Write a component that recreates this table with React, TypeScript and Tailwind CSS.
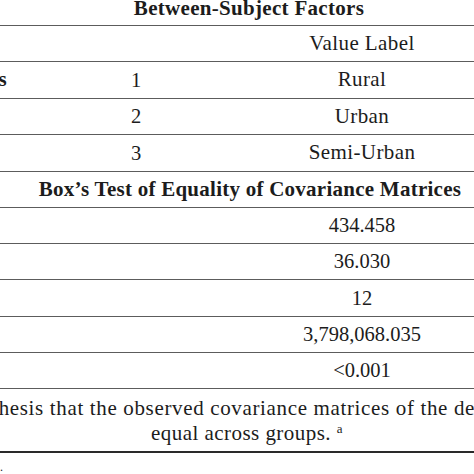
import React from "react";

const serif = { fontFamily: '"Liberation Serif", "Times New Roman", serif' };

const factorRows = [
  { label: "Areas", value: "1", name: "Rural", h: "h-[37px]" },
  { label: "", value: "2", name: "Urban", h: "h-[36px]" },
  { label: "", value: "3", name: "Semi-Urban", h: "h-[37px]" },
];

const boxRows = [
  { value: "434.458", h: "h-[36px]" },
  { value: "36.030", h: "h-[36px]" },
  { value: "12", h: "h-[37px]" },
  { value: "3,798,068.035", h: "h-[36px]" },
  { value: "<0.001", h: "h-[36px]" },
];

function Row({
  h,
  label,
  value,
  name,
  numeric,
}: {
  h: string;
  label?: string;
  value?: string;
  name: string;
  numeric?: boolean;
}) {
  return (
    <div className={`grid grid-cols-[126px_100px_352px] border-b border-[#5c5c5c] ${h}`}>
      <div className="flex items-center justify-end pr-[79px] font-bold tracking-[0.3px]">{label}</div>
      <div className="flex items-center justify-center text-[20.5px]">{value}</div>
      <div
        className={`flex items-center justify-center ${
          numeric ? "text-[20.5px]" : "tracking-[0.4px]"
        }`}
      >
        {name}
      </div>
    </div>
  );
}

export default function App() {
  return (
    <div className="h-[474px] w-[474px] overflow-hidden bg-white text-[21px] text-[#1c1c1c]" style={serif}>
      <div className="-ml-[40px] w-[578px]">
        <div className="h-[26px] border-b border-[#5c5c5c] text-center font-bold leading-[17px] tracking-[0.3px]">
          Between-Subject Factors
        </div>
        <Row h="h-[36px]" name="Value Label" />
        {factorRows.map((r) => (
          <Row key={r.value} h={r.h} label={r.label} value={r.value} name={r.name} />
        ))}
        <div className="flex h-[36px] items-center justify-center border-b border-[#5c5c5c] pl-[2px] font-bold tracking-[0.25px]">
          Box’s Test of Equality of Covariance Matrices
        </div>
        {boxRows.map((r) => (
          <Row key={r.value} h={r.h} name={r.value} numeric />
        ))}
        <div className="flex h-[64px] flex-col items-center justify-center border-b-2 border-[#2a2a2a] pb-[2px] leading-[25px] tracking-[0.45px]">
          <span className="whitespace-nowrap pt-[3px] pr-[10px] tracking-[0.65px]">
            Tests the null hypothesis that the observed covariance matrices of the dependent variables are
          </span>
          <span className="whitespace-nowrap pr-[4px]">
            equal across groups. <sup className="text-[13px]">a</sup>
          </span>
        </div>
        <div className="pl-[40px] text-[12px] leading-[28px]">.</div>
      </div>
    </div>
  );
}
